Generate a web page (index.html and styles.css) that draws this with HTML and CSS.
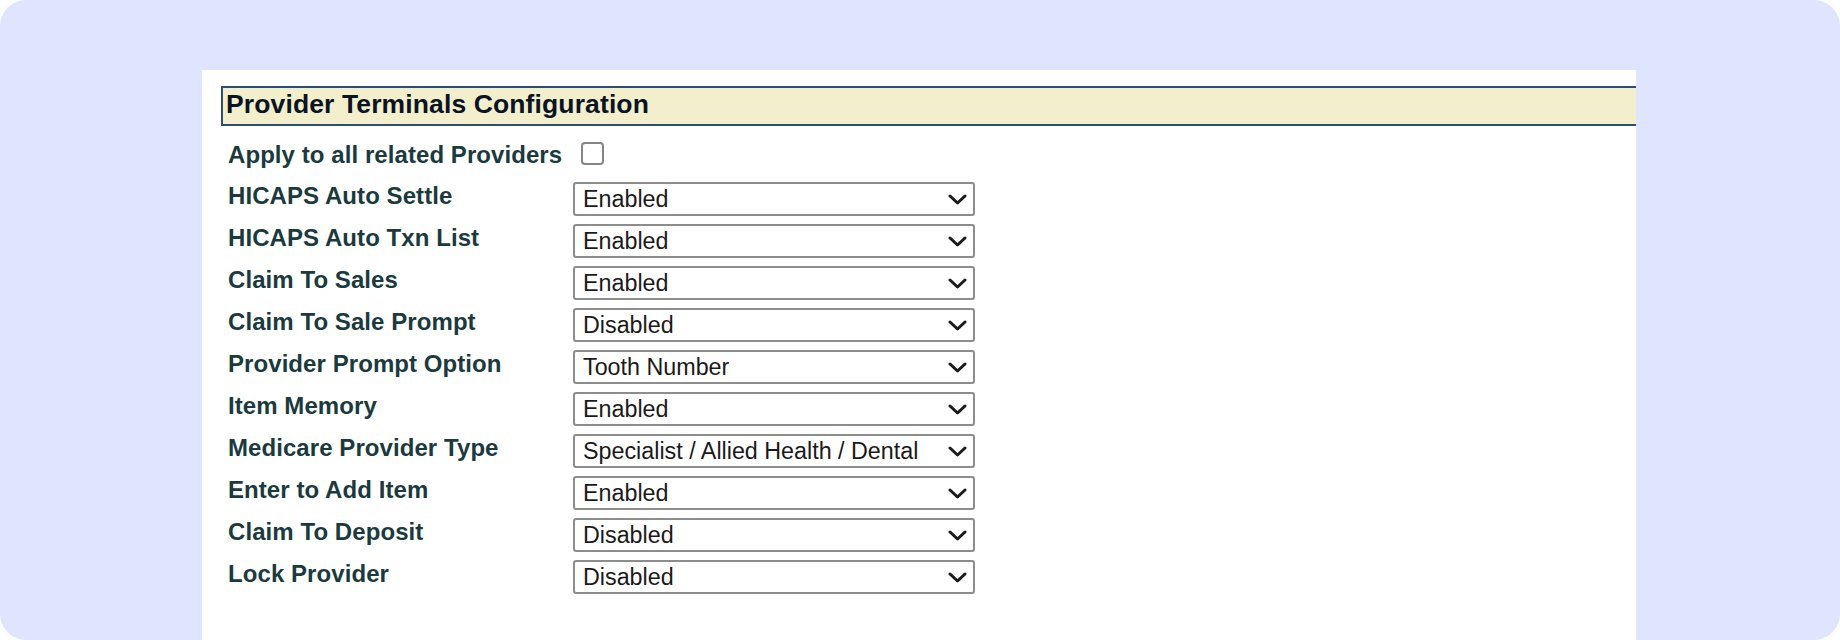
FILE: index.html
```html
<!DOCTYPE html>
<html lang="en">
<head>
    <meta charset="UTF-8">
    <meta name="viewport" content="width=device-width, initial-scale=1.0">
    <title>Provider Terminals Configuration</title>
    <link rel="stylesheet" href="styles.css">
</head>
<body>
    <div class="frame">
        <div class="panel">
            <div class="section-title">Provider Terminals Configuration</div>
            <div class="settings">
                <label class="field-label" for="applyAll">Apply to all related Providers</label>
                <div class="field"><input type="checkbox" id="applyAll" class="check"></div>

                <label class="field-label">HICAPS Auto Settle</label>
                <div class="field select-wrap">
                    <select><option selected>Enabled</option><option>Disabled</option></select>
                    <svg class="chevron" viewBox="0 0 19 11"><path d="M2 2 L9.5 9 L17 2" /></svg>
                </div>

                <label class="field-label">HICAPS Auto Txn List</label>
                <div class="field select-wrap">
                    <select><option selected>Enabled</option><option>Disabled</option></select>
                    <svg class="chevron" viewBox="0 0 19 11"><path d="M2 2 L9.5 9 L17 2" /></svg>
                </div>

                <label class="field-label">Claim To Sales</label>
                <div class="field select-wrap">
                    <select><option selected>Enabled</option><option>Disabled</option></select>
                    <svg class="chevron" viewBox="0 0 19 11"><path d="M2 2 L9.5 9 L17 2" /></svg>
                </div>

                <label class="field-label">Claim To Sale Prompt</label>
                <div class="field select-wrap">
                    <select><option>Enabled</option><option selected>Disabled</option></select>
                    <svg class="chevron" viewBox="0 0 19 11"><path d="M2 2 L9.5 9 L17 2" /></svg>
                </div>

                <label class="field-label">Provider Prompt Option</label>
                <div class="field select-wrap">
                    <select><option selected>Tooth Number</option><option>None</option></select>
                    <svg class="chevron" viewBox="0 0 19 11"><path d="M2 2 L9.5 9 L17 2" /></svg>
                </div>

                <label class="field-label">Item Memory</label>
                <div class="field select-wrap">
                    <select><option selected>Enabled</option><option>Disabled</option></select>
                    <svg class="chevron" viewBox="0 0 19 11"><path d="M2 2 L9.5 9 L17 2" /></svg>
                </div>

                <label class="field-label">Medicare Provider Type</label>
                <div class="field select-wrap">
                    <select><option selected>Specialist / Allied Health / Dental</option><option>General Practitioner</option></select>
                    <svg class="chevron" viewBox="0 0 19 11"><path d="M2 2 L9.5 9 L17 2" /></svg>
                </div>

                <label class="field-label">Enter to Add Item</label>
                <div class="field select-wrap">
                    <select><option selected>Enabled</option><option>Disabled</option></select>
                    <svg class="chevron" viewBox="0 0 19 11"><path d="M2 2 L9.5 9 L17 2" /></svg>
                </div>

                <label class="field-label">Claim To Deposit</label>
                <div class="field select-wrap">
                    <select><option>Enabled</option><option selected>Disabled</option></select>
                    <svg class="chevron" viewBox="0 0 19 11"><path d="M2 2 L9.5 9 L17 2" /></svg>
                </div>

                <label class="field-label">Lock Provider</label>
                <div class="field select-wrap">
                    <select><option>Enabled</option><option selected>Disabled</option></select>
                    <svg class="chevron" viewBox="0 0 19 11"><path d="M2 2 L9.5 9 L17 2" /></svg>
                </div>
            </div>
        </div>
    </div>
</body>
</html>
```

FILE: styles.css
```css
html, body {
    margin: 0;
    padding: 0;
    background-color: #ffffff;
}

body {
    font-family: "Liberation Sans", Arial, sans-serif;
}

.frame {
    display: flex;
    height: 640px;
    box-sizing: border-box;
    padding: 70px 204px 0 202px;
    background-color: #e0e5ff;
    border-radius: 26px;
}

.panel {
    flex: 1;
    background-color: #ffffff;
    padding: 16px 0 0 19px;
    overflow: hidden;
}

.section-title {
    border: 2px solid #2c4d75;
    border-right: none;
    background-color: #f3efcd;
    color: #0b1424;
    font-size: 26.5px;
    font-weight: bold;
    letter-spacing: 0.12px;
    line-height: 32px;
    padding: 0 0 4px 3px;
}

.settings {
    display: grid;
    grid-template-columns: 347px 402px;
    grid-template-rows: 33px;
    grid-auto-rows: 34px;
    row-gap: 8px;
    margin-top: 15px;
    padding-left: 5px;
}

.field-label {
    padding-left: 2px;
    font-size: 24px;
    font-weight: bold;
    letter-spacing: 0.07px;
    line-height: 27px;
    color: #1b3a40;
}

.check {
    appearance: none;
    margin: 1px 0 0 8px;
    width: 23px;
    height: 23px;
    box-sizing: border-box;
    border: 2px solid #858585;
    border-radius: 4px;
    background-color: #ffffff;
}

.select-wrap {
    position: relative;
}

.select-wrap select {
    appearance: none;
    width: 100%;
    height: 34px;
    box-sizing: border-box;
    margin: 0;
    padding: 0 30px 0 8px;
    border: 2px solid #8d8d8d;
    border-radius: 3px;
    background-color: #ffffff;
    color: #1a1a1a;
    font-family: "Liberation Sans", Arial, sans-serif;
    font-size: 23.3px;
}

.chevron {
    position: absolute;
    right: 8px;
    top: 12px;
    width: 19px;
    height: 11px;
    pointer-events: none;
}

.chevron path {
    fill: none;
    stroke: #1a1a1a;
    stroke-width: 3;
    stroke-linecap: round;
    stroke-linejoin: round;
}
```
